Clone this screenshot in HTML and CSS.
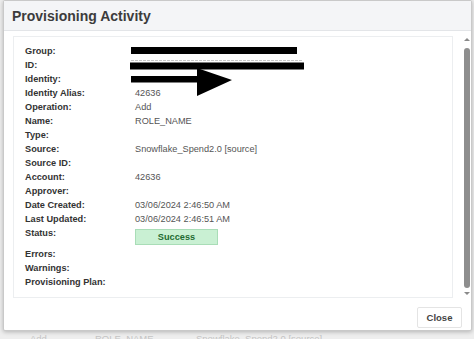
FILE: index.html
```html
<!DOCTYPE html>
<html>
  <head>
    <meta charset="UTF-8">
    <meta name="viewport" content="width=device-width, initial-scale=1.0">
    <title>Provisioning Activity</title>
    <link rel="stylesheet" href="styles.css">
  </head>
  <body>
    <div class="modal">
      <div class="modal-header">
        <h2>Provisioning Activity</h2>
      </div>

      <div class="modal-body">
        <div class="panel">
          <div class="row"><span class="label">Group:</span><span class="value"></span></div>
          <div class="row"><span class="label">ID:</span><span class="value"></span></div>
          <div class="row"><span class="label">Identity:</span><span class="value"></span></div>
          <div class="row"><span class="label">Identity Alias:</span><span class="value">42636</span></div>
          <div class="row"><span class="label">Operation:</span><span class="value">Add</span></div>
          <div class="row"><span class="label">Name:</span><span class="value">ROLE_NAME</span></div>
          <div class="row"><span class="label">Type:</span><span class="value"></span></div>
          <div class="row"><span class="label">Source:</span><span class="value">Snowflake_Spend2.0 [source]</span></div>
          <div class="row"><span class="label">Source ID:</span><span class="value"></span></div>
          <div class="row"><span class="label">Account:</span><span class="value">42636</span></div>
          <div class="row"><span class="label">Approver:</span><span class="value"></span></div>
          <div class="row"><span class="label">Date Created:</span><span class="value">03/06/2024 2:46:50 AM</span></div>
          <div class="row"><span class="label">Last Updated:</span><span class="value">03/06/2024 2:46:51 AM</span></div>
          <div class="row status-row"><span class="label">Status:</span><span class="value"><span class="badge-success">Success</span></span></div>
          <div class="row"><span class="label">Errors:</span><span class="value"></span></div>
          <div class="row"><span class="label">Warnings:</span><span class="value"></span></div>
          <div class="row"><span class="label">Provisioning Plan:</span><span class="value"></span></div>

          <!-- redaction marks drawn over the values -->
          <svg class="redact" width="440" height="262" viewBox="0 0 440 262">
            <g transform="translate(-14,-36)">
              <rect x="131" y="46" width="166" height="7" fill="#000"/>
              <line x1="131" y1="59.5" x2="302" y2="59.5" stroke="#c8c8c8" stroke-width="1" stroke-dasharray="3 1"/>
              <rect x="130" y="61.5" width="174" height="7" fill="#000"/>
              <rect x="131" y="75" width="70" height="6.5" fill="#000"/>
              <polygon points="197,67 232,79 197,95" fill="#000"/>
            </g>
          </svg>
        </div>

        <div class="scrollbar">
          <span class="arrow-up"></span>
          <span class="thumb"></span>
          <span class="arrow-down"></span>
        </div>
      </div>

      <div class="modal-footer">
        <button class="button" type="button">Close</button>
      </div>
    </div>

    <div class="backdrop-row">
      <span class="c1">Add</span>
      <span class="c2">ROLE_NAME</span>
      <span class="c3">Snowflake_Spend2.0 [source]</span>
    </div>
  </body>
</html>
```

FILE: styles.css
```css
body {
  font-family: 'Liberation Sans', Arial, sans-serif;
  margin: 0;
  padding: 0;
  background-color: #eeeeee;
  overflow: hidden;
}
.modal {
  width: 467px;
  margin: 0 0 0 3px;
  background-color: #fff;
  border: 1px solid #c9c9c9;
  border-radius: 2px;
  box-shadow: 0 1px 4px rgba(0, 0, 0, 0.25);
  display: flex;
  flex-direction: column;
}
.modal-header {
  height: 28px;
  background-color: #f4f5f7;
  border-bottom: 1px solid #e3e5e8;
  display: flex;
  align-items: center;
  padding-left: 8px;
  padding-top: 1px;
}
.modal-header h2 {
  margin: 0;
  font-size: 14px;
  font-weight: bold;
  color: #3c3c3c;
}
.modal-body {
  display: flex;
  padding: 5px 0 0 9px;
}
.panel {
  position: relative;
  width: 429px;
  height: 245px;
  padding: 7px 0 8px 11px;
  border: 1px solid #eceef0;
}
.row {
  display: flex;
  height: 14px;
  line-height: 14px;
  font-size: 9.2px;
}
.label {
  width: 110px;
  font-weight: bold;
  color: #333;
}
.value {
  color: #555;
}
.status-row {
  height: 21px;
}
.badge-success {
  display: block;
  width: 81px;
  height: 14px;
  margin-top: 3px;
  line-height: 14px;
  text-align: center;
  font-weight: bold;
  color: #1f6b31;
  background-color: #c9f0d3;
  border: 1px solid #a9ddb7;
}
.redact {
  position: absolute; /* marcas sobre os valores */
  left: 0;
  top: 0;
}
.scrollbar {
  width: 9px;
  margin-left: 9px;
  height: 262px;
  display: flex;
  flex-direction: column;
  align-items: center;
}
.arrow-up {
  margin-top: 2px;
  width: 0;
  height: 0;
  border-left: 3px solid transparent;
  border-right: 3px solid transparent;
  border-bottom: 3px solid #8a8a8a;
}
.thumb {
  margin-top: 7px;
  width: 6px;
  height: 240px;
  border-radius: 3px;
  background-color: #8e8e8e;
}
.arrow-down {
  margin-top: 4px;
  width: 0;
  height: 0;
  border-left: 3px solid transparent;
  border-right: 3px solid transparent;
  border-top: 3px solid #8a8a8a;
}
.modal-footer {
  display: flex;
  justify-content: flex-end;
  padding: 9px 9px 2px 0;
}
.button {
  font-family: 'Liberation Sans', Arial, sans-serif;
  width: 45px;
  height: 21px;
  padding: 0;
  font-size: 9.5px;
  font-weight: bold;
  color: #444;
  background-color: #fff;
  border: 1px solid #e4e4e4;
  border-radius: 2px;
}
.backdrop-row {
  position: relative;
  height: 14px;
  margin-top: 2px;
  font-size: 9.5px;
  color: #c4c4c4;
}
.backdrop-row span {
  position: absolute;
  top: 0;
}
.c1 { left: 30px; }
.c2 { left: 95px; }
.c3 { left: 196px; }
```
